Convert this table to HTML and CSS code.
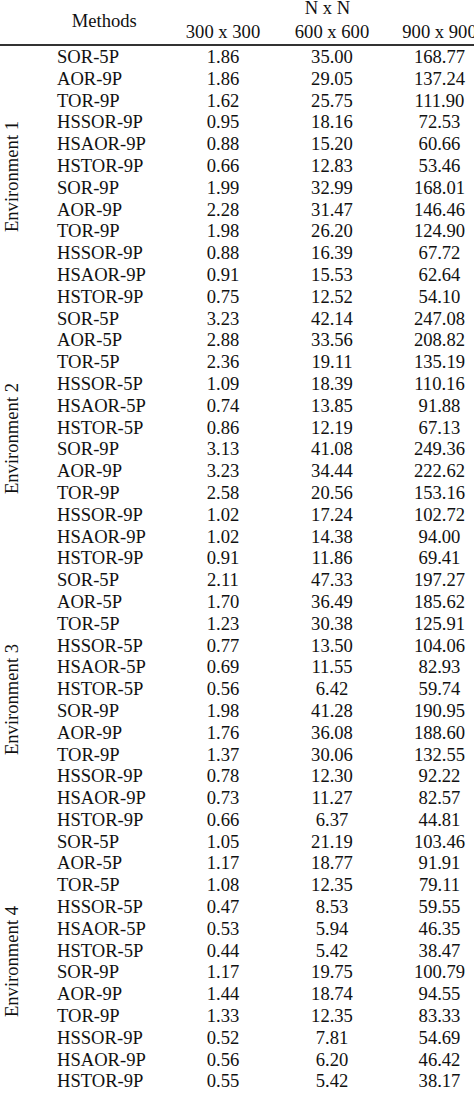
FILE: index.html
```html
<!DOCTYPE html>
<html lang="en">
<head>
<meta charset="utf-8">
<title>Execution time table</title>
<link rel="stylesheet" href="styles.css">
</head>
<body>
<div class="table">
  <div class="head">
    <div class="h-methods">Methods</div>
    <div class="h-nxn">N x N</div>
    <div class="h-size">300 x 300</div>
    <div class="h-size">600 x 600</div>
    <div class="h-size">900 x 900</div>
  </div>

  <div class="group">
    <div class="env"><span>Environment 1</span></div>
    <div class="m">SOR-5P</div><div class="n">1.86</div><div class="n">35.00</div><div class="n">168.77</div>
    <div class="m">AOR-9P</div><div class="n">1.86</div><div class="n">29.05</div><div class="n">137.24</div>
    <div class="m">TOR-9P</div><div class="n">1.62</div><div class="n">25.75</div><div class="n">111.90</div>
    <div class="m">HSSOR-9P</div><div class="n">0.95</div><div class="n">18.16</div><div class="n">72.53</div>
    <div class="m">HSAOR-9P</div><div class="n">0.88</div><div class="n">15.20</div><div class="n">60.66</div>
    <div class="m">HSTOR-9P</div><div class="n">0.66</div><div class="n">12.83</div><div class="n">53.46</div>
    <div class="m">SOR-9P</div><div class="n">1.99</div><div class="n">32.99</div><div class="n">168.01</div>
    <div class="m">AOR-9P</div><div class="n">2.28</div><div class="n">31.47</div><div class="n">146.46</div>
    <div class="m">TOR-9P</div><div class="n">1.98</div><div class="n">26.20</div><div class="n">124.90</div>
    <div class="m">HSSOR-9P</div><div class="n">0.88</div><div class="n">16.39</div><div class="n">67.72</div>
    <div class="m">HSAOR-9P</div><div class="n">0.91</div><div class="n">15.53</div><div class="n">62.64</div>
    <div class="m">HSTOR-9P</div><div class="n">0.75</div><div class="n">12.52</div><div class="n">54.10</div>
  </div>

  <div class="group">
    <div class="env"><span>Environment 2</span></div>
    <div class="m">SOR-5P</div><div class="n">3.23</div><div class="n">42.14</div><div class="n">247.08</div>
    <div class="m">AOR-5P</div><div class="n">2.88</div><div class="n">33.56</div><div class="n">208.82</div>
    <div class="m">TOR-5P</div><div class="n">2.36</div><div class="n">19.11</div><div class="n">135.19</div>
    <div class="m">HSSOR-5P</div><div class="n">1.09</div><div class="n">18.39</div><div class="n">110.16</div>
    <div class="m">HSAOR-5P</div><div class="n">0.74</div><div class="n">13.85</div><div class="n">91.88</div>
    <div class="m">HSTOR-5P</div><div class="n">0.86</div><div class="n">12.19</div><div class="n">67.13</div>
    <div class="m">SOR-9P</div><div class="n">3.13</div><div class="n">41.08</div><div class="n">249.36</div>
    <div class="m">AOR-9P</div><div class="n">3.23</div><div class="n">34.44</div><div class="n">222.62</div>
    <div class="m">TOR-9P</div><div class="n">2.58</div><div class="n">20.56</div><div class="n">153.16</div>
    <div class="m">HSSOR-9P</div><div class="n">1.02</div><div class="n">17.24</div><div class="n">102.72</div>
    <div class="m">HSAOR-9P</div><div class="n">1.02</div><div class="n">14.38</div><div class="n">94.00</div>
    <div class="m">HSTOR-9P</div><div class="n">0.91</div><div class="n">11.86</div><div class="n">69.41</div>
  </div>

  <div class="group">
    <div class="env"><span>Environment 3</span></div>
    <div class="m">SOR-5P</div><div class="n">2.11</div><div class="n">47.33</div><div class="n">197.27</div>
    <div class="m">AOR-5P</div><div class="n">1.70</div><div class="n">36.49</div><div class="n">185.62</div>
    <div class="m">TOR-5P</div><div class="n">1.23</div><div class="n">30.38</div><div class="n">125.91</div>
    <div class="m">HSSOR-5P</div><div class="n">0.77</div><div class="n">13.50</div><div class="n">104.06</div>
    <div class="m">HSAOR-5P</div><div class="n">0.69</div><div class="n">11.55</div><div class="n">82.93</div>
    <div class="m">HSTOR-5P</div><div class="n">0.56</div><div class="n">6.42</div><div class="n">59.74</div>
    <div class="m">SOR-9P</div><div class="n">1.98</div><div class="n">41.28</div><div class="n">190.95</div>
    <div class="m">AOR-9P</div><div class="n">1.76</div><div class="n">36.08</div><div class="n">188.60</div>
    <div class="m">TOR-9P</div><div class="n">1.37</div><div class="n">30.06</div><div class="n">132.55</div>
    <div class="m">HSSOR-9P</div><div class="n">0.78</div><div class="n">12.30</div><div class="n">92.22</div>
    <div class="m">HSAOR-9P</div><div class="n">0.73</div><div class="n">11.27</div><div class="n">82.57</div>
    <div class="m">HSTOR-9P</div><div class="n">0.66</div><div class="n">6.37</div><div class="n">44.81</div>
  </div>

  <div class="group">
    <div class="env"><span>Environment 4</span></div>
    <div class="m">SOR-5P</div><div class="n">1.05</div><div class="n">21.19</div><div class="n">103.46</div>
    <div class="m">AOR-5P</div><div class="n">1.17</div><div class="n">18.77</div><div class="n">91.91</div>
    <div class="m">TOR-5P</div><div class="n">1.08</div><div class="n">12.35</div><div class="n">79.11</div>
    <div class="m">HSSOR-5P</div><div class="n">0.47</div><div class="n">8.53</div><div class="n">59.55</div>
    <div class="m">HSAOR-5P</div><div class="n">0.53</div><div class="n">5.94</div><div class="n">46.35</div>
    <div class="m">HSTOR-5P</div><div class="n">0.44</div><div class="n">5.42</div><div class="n">38.47</div>
    <div class="m">SOR-9P</div><div class="n">1.17</div><div class="n">19.75</div><div class="n">100.79</div>
    <div class="m">AOR-9P</div><div class="n">1.44</div><div class="n">18.74</div><div class="n">94.55</div>
    <div class="m">TOR-9P</div><div class="n">1.33</div><div class="n">12.35</div><div class="n">83.33</div>
    <div class="m">HSSOR-9P</div><div class="n">0.52</div><div class="n">7.81</div><div class="n">54.69</div>
    <div class="m">HSAOR-9P</div><div class="n">0.56</div><div class="n">6.20</div><div class="n">46.42</div>
    <div class="m">HSTOR-9P</div><div class="n">0.55</div><div class="n">5.42</div><div class="n">38.17</div>
  </div>
</div>
</body>
</html>
```

FILE: styles.css
```css
html, body {
  margin: 0;
  padding: 0;
  background: #ffffff;
  overflow: hidden;
}

body {
  width: 474px;
  height: 1094px;
  font-family: "Liberation Serif", "Times New Roman", serif;
  font-size: 18.6px;
  color: #111111;
}

.table {
  width: 492px;
}

.head {
  display: grid;
  grid-template-columns: 24px 144.5px 109px 109px 106px;
  grid-template-rows: 20px 24px;
  border-bottom: 2px solid #333333;
  white-space: nowrap;
}

.h-methods {
  grid-column: 2;
  grid-row: 1 / span 2;
  align-self: center;
  line-height: 20px;
  padding: 0 17px 2px 33px;
  text-align: center;
}

.h-nxn {
  grid-column: 3 / span 3;
  grid-row: 1;
  line-height: 16px;
  padding-right: 6px;
  text-align: center;
  align-self: start;
}

.h-size {
  grid-row: 2;
  line-height: 24px;
  text-align: center;
}

.h-size:nth-child(3) { grid-column: 3; }
.h-size:nth-child(4) { grid-column: 4; }
.h-size:nth-child(5) { grid-column: 5; }

.group {
  display: grid;
  grid-template-columns: 24px 144.5px 109px 109px 106px;
  grid-auto-rows: 21.8px;
  line-height: 21.8px;
  white-space: nowrap;
}

.env {
  grid-column: 1;
  grid-row: 1 / span 12;
  display: flex;
  align-items: center;
  justify-content: center;
}

.env span {
  writing-mode: vertical-rl;
  transform: rotate(180deg);
  line-height: 20px;
}

.m {
  padding-left: 33px;
}

.n {
  text-align: center;
}
```
